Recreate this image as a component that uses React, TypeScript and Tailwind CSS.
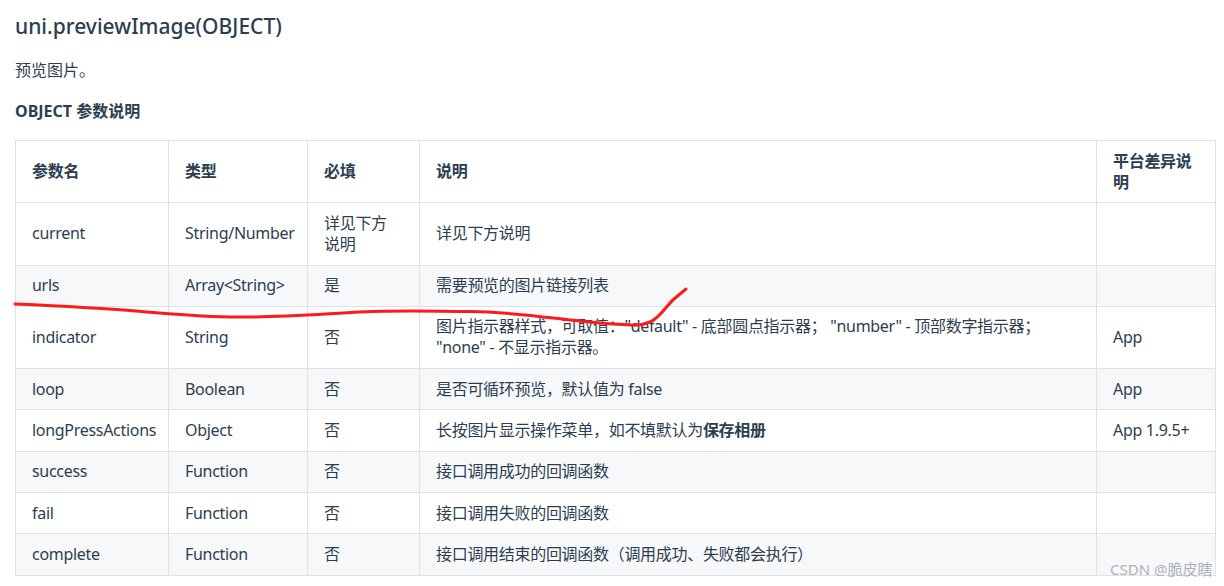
import React from "react";

type Row = {
  name: string;
  type: string;
  required: React.ReactNode;
  desc: React.ReactNode;
  platform: string;
};

const rows: Row[] = [
  {
    name: "current",
    type: "String/Number",
    required: (
      <>
        详见下方
        <br />
        说明
      </>
    ),
    desc: "详见下方说明",
    platform: "",
  },
  { name: "urls", type: "Array<String>", required: "是", desc: "需要预览的图片链接列表", platform: "" },
  {
    name: "indicator",
    type: "String",
    required: "否",
    desc: (
      <>
        图片指示器样式，可取值："default" - 底部圆点指示器； "number" - 顶部数字指示器；
        <br />
        "none" - 不显示指示器。
      </>
    ),
    platform: "App",
  },
  { name: "loop", type: "Boolean", required: "否", desc: "是否可循环预览，默认值为 false", platform: "App" },
  {
    name: "longPressActions",
    type: "Object",
    required: "否",
    desc: (
      <>
        长按图片显示操作菜单，如不填默认为<strong className="font-bold">保存相册</strong>
      </>
    ),
    platform: "App 1.9.5+",
  },
  { name: "success", type: "Function", required: "否", desc: "接口调用成功的回调函数", platform: "" },
  { name: "fail", type: "Function", required: "否", desc: "接口调用失败的回调函数", platform: "" },
  { name: "complete", type: "Function", required: "否", desc: "接口调用结束的回调函数（调用成功、失败都会执行）", platform: "" },
];

const cell = "border border-[#dfe2e5] px-4 py-[9.65px] align-middle text-left";

export default function App() {
  return (
    <div
      className="relative h-[586px] overflow-hidden bg-white px-[15px] text-[#2c3e50]"
      style={{ fontFamily: '"Noto Sans", "Noto Sans CJK SC", sans-serif' }}
    >
      <h1 className="pt-[11px] text-[21px] leading-[30px] font-medium">uni.previewImage(OBJECT)</h1>
      <p className="mt-[17px] text-[16px] leading-[24px]">预览图片。</p>
      <h4 className="mt-[17px] text-[16px] leading-[24px] font-bold">OBJECT 参数说明</h4>

      <table className="mt-[17px] w-[1200px] table-fixed border-collapse text-[16px] leading-[21px] tracking-[-0.3px]">
        <colgroup>
          <col className="w-[153px]" />
          <col className="w-[139px]" />
          <col className="w-[112px]" />
          <col className="w-[677px]" />
          <col className="w-[119px]" />
        </colgroup>
        <thead>
          <tr className="bg-white">
            <th className={`${cell} font-bold`}>参数名</th>
            <th className={`${cell} font-bold`}>类型</th>
            <th className={`${cell} font-bold`}>必填</th>
            <th className={`${cell} font-bold`}>说明</th>
            <th className={`${cell} font-bold`}>平台差异说明</th>
          </tr>
        </thead>
        <tbody>
          {rows.map((r, i) => (
            <tr key={r.name} className={i % 2 === 1 ? "bg-[#f6f8fa]" : "bg-white"}>
              <td className={cell}>{r.name}</td>
              <td className={cell}>{r.type}</td>
              <td className={cell}>{r.required}</td>
              <td className={cell}>{r.desc}</td>
              <td className={cell}>{r.platform}</td>
            </tr>
          ))}
        </tbody>
      </table>

      {/* red hand-drawn underline */}
      <svg className="pointer-events-none absolute left-0 top-0" width="1224" height="586">
        <path
          d="M15 304 C60 306 100 308 130 310.5 S190 316 230 317 S320 314 360 312 S420 311 470 311.5 S560 320 600 323 S640 326 650 322 S666 306 674 299 L686 289"
          fill="none"
          stroke="#ff1a1a"
          strokeWidth="3"
          strokeLinecap="round"
        />
      </svg>

      <div className="absolute left-[1110px] top-[559px] text-[15px] leading-[20px] text-[#b0b3b8]">
        CSDN @脆皮瞎
      </div>
    </div>
  );
}
